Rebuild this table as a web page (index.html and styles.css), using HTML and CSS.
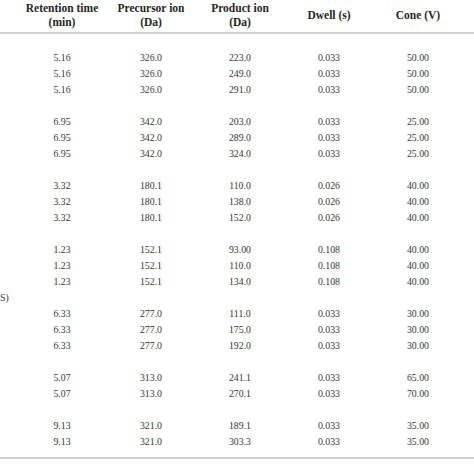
FILE: index.html
```html
<!DOCTYPE html>
<html>
<head>
<meta charset="utf-8">
<link rel="stylesheet" href="styles.css">
</head>
<body>
<div class="table">
  <div class="head">
    <div></div>
    <div class="h">Retention time<br>(min)</div>
    <div class="h">Precursor ion<br>(Da)</div>
    <div class="h">Product ion<br>(Da)</div>
    <div class="h">Dwell (s)</div>
    <div class="h">Cone (V)</div>
  </div>
  <div class="body">
    <div class="row"></div>
    <div class="row"><span></span><span>5.16</span><span>326.0</span><span>223.0</span><span>0.033</span><span>50.00</span></div>
    <div class="row"><span></span><span>5.16</span><span>326.0</span><span>249.0</span><span>0.033</span><span>50.00</span></div>
    <div class="row"><span></span><span>5.16</span><span>326.0</span><span>291.0</span><span>0.033</span><span>50.00</span></div>
    <div class="row"></div>
    <div class="row"><span></span><span>6.95</span><span>342.0</span><span>203.0</span><span>0.033</span><span>25.00</span></div>
    <div class="row"><span></span><span>6.95</span><span>342.0</span><span>289.0</span><span>0.033</span><span>25.00</span></div>
    <div class="row"><span></span><span>6.95</span><span>342.0</span><span>324.0</span><span>0.033</span><span>25.00</span></div>
    <div class="row"></div>
    <div class="row"><span></span><span>3.32</span><span>180.1</span><span>110.0</span><span>0.026</span><span>40.00</span></div>
    <div class="row"><span></span><span>3.32</span><span>180.1</span><span>138.0</span><span>0.026</span><span>40.00</span></div>
    <div class="row"><span></span><span>3.32</span><span>180.1</span><span>152.0</span><span>0.026</span><span>40.00</span></div>
    <div class="row"></div>
    <div class="row"><span></span><span>1.23</span><span>152.1</span><span>93.00</span><span>0.108</span><span>40.00</span></div>
    <div class="row"><span></span><span>1.23</span><span>152.1</span><span>110.0</span><span>0.108</span><span>40.00</span></div>
    <div class="row"><span></span><span>1.23</span><span>152.1</span><span>134.0</span><span>0.108</span><span>40.00</span></div>
    <div class="row"><span class="label">S)</span></div>
    <div class="row"><span></span><span>6.33</span><span>277.0</span><span>111.0</span><span>0.033</span><span>30.00</span></div>
    <div class="row"><span></span><span>6.33</span><span>277.0</span><span>175.0</span><span>0.033</span><span>30.00</span></div>
    <div class="row"><span></span><span>6.33</span><span>277.0</span><span>192.0</span><span>0.033</span><span>30.00</span></div>
    <div class="row"></div>
    <div class="row"><span></span><span>5.07</span><span>313.0</span><span>241.1</span><span>0.033</span><span>65.00</span></div>
    <div class="row"><span></span><span>5.07</span><span>313.0</span><span>270.1</span><span>0.033</span><span>70.00</span></div>
    <div class="row"></div>
    <div class="row"><span></span><span>9.13</span><span>321.0</span><span>189.1</span><span>0.033</span><span>35.00</span></div>
    <div class="row"><span></span><span>9.13</span><span>321.0</span><span>303.3</span><span>0.033</span><span>35.00</span></div>
  </div>
</div>
</body>
</html>
```
FILE: styles.css
```css
html, body {
  margin: 0;
  padding: 0;
  background: #ffffff;
}
body {
  width: 474px;
  height: 474px;
  overflow: hidden;
  font-family: "Liberation Serif", "Times New Roman", serif;
  color: #363636;
}
.table {
  width: 474px;
}
.head {
  display: grid;
  grid-template-columns: 17.5px repeat(5, 89px);
  height: 34px;
  border-bottom: 2px solid #d2d2d2;
  box-sizing: border-box;
}
.h {
  display: flex;
  align-items: center;
  justify-content: center;
  text-align: center;
  font-weight: bold;
  font-size: 11.5px;
  line-height: 14px;
  color: #262626;
  padding-bottom: 2px;
}
.body {
  padding-bottom: 7px;
  border-bottom: 2px solid #d2d2d2;
}
.row {
  display: grid;
  grid-template-columns: 17.5px repeat(5, 89px);
  height: 16px;
  align-items: center;
  font-size: 9.8px;
  line-height: 16px;
}
.row span {
  text-align: center;
  white-space: nowrap;
}
.row .label {
  text-align: left;
}
```
